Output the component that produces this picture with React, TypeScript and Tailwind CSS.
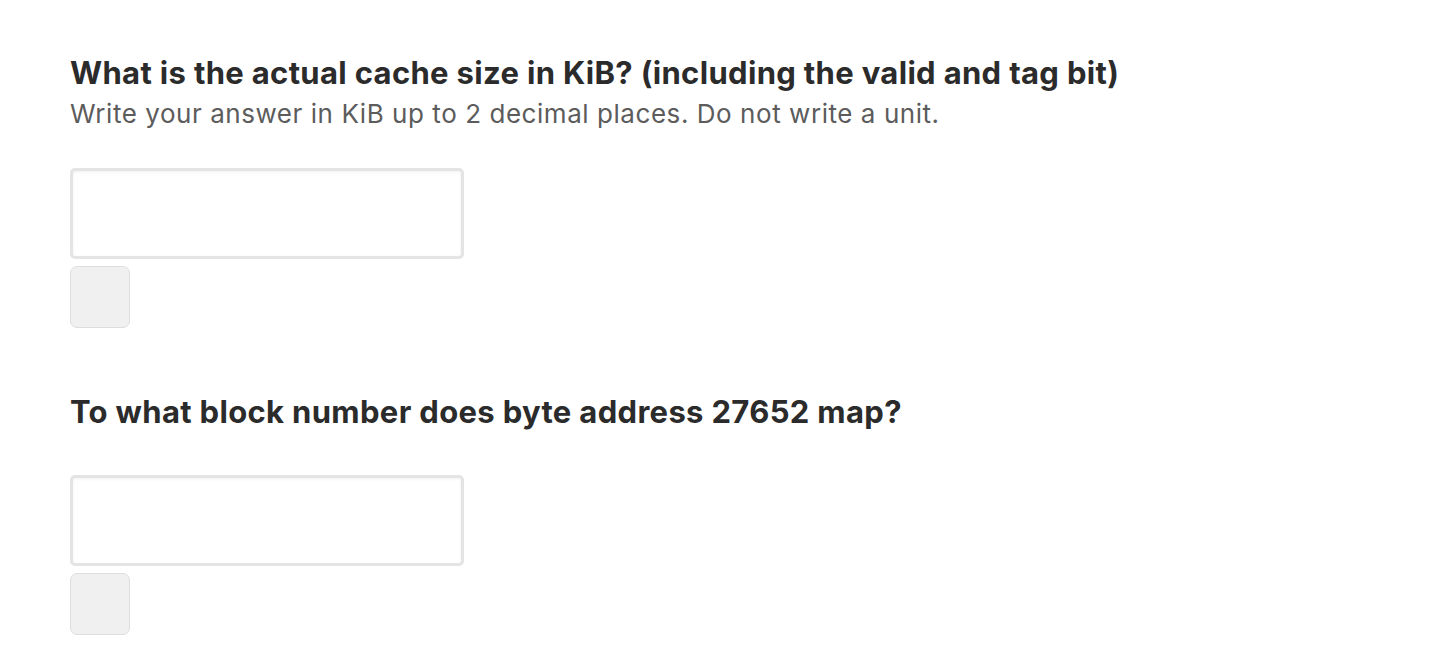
import React from 'react';

type Question = {
  title: string;
  hint?: string;
};

const QUESTIONS: Question[] = [
  {
    title: 'What is the actual cache size in KiB? (including the valid and tag bit)',
    hint: 'Write your answer in KiB up to 2 decimal places. Do not write a unit.',
  },
  {
    title: 'To what block number does byte address 27652 map?',
  },
];

const QuestionBlock: React.FC<{ q: Question }> = ({ q }) => {
  return (
    <div className="flex flex-col">
      <h2 className="text-[31px] leading-[38px] tracking-[0.33px] font-bold text-[#2b2b2b]">{q.title}</h2>
      {q.hint && (
        <p className="mt-[4px] text-[26px] leading-[36px] tracking-[0.55px] text-[#5c5c5c]">{q.hint}</p>
      )}
      <input
        type="text"
        className={`${q.hint ? 'mt-[36px]' : 'mt-[44px]'} w-[394px] h-[91px] border-[3px] border-[#e4e4e4] rounded-[5px] bg-white shadow-[inset_0_1px_3px_rgba(0,0,0,0.06)] focus:outline-none`}
        autoComplete="off"
      />
      <button
        type="button"
        className="mt-[7px] w-[60px] h-[62px] rounded-[7px] border border-[#dedede] bg-[#f0f0f0]"
      />
    </div>
  );
};

const App: React.FC = () => {
  return (
    <div
      className="min-h-screen bg-white px-[70px] pt-[54px] flex flex-col gap-[65px]"
      style={{ fontFamily: 'Inter, "Noto Sans", sans-serif' }}
    >
      {QUESTIONS.map((q, i) => (
        <QuestionBlock key={i} q={q} />
      ))}
    </div>
  );
};

export default App;
